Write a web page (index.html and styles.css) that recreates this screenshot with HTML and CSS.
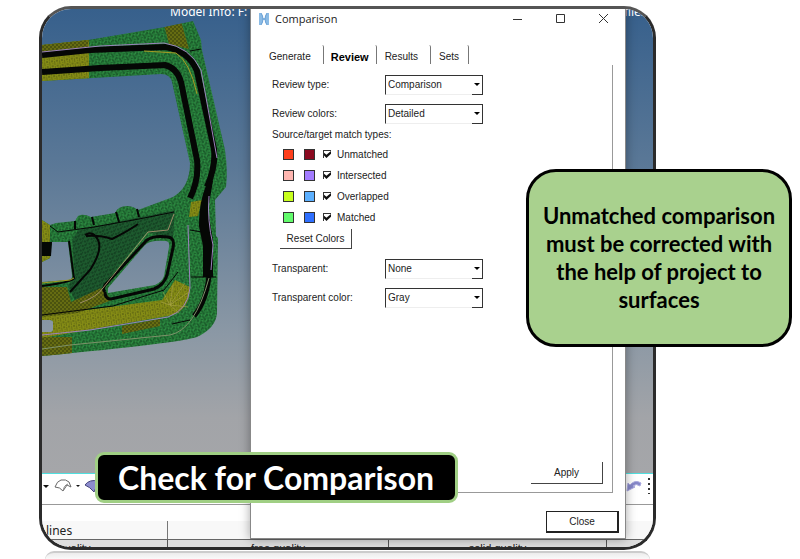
FILE: index.html
```html
<!DOCTYPE html>
<html lang="en">
<head>
<meta charset="utf-8">
<title>Check for Comparison</title>
<link rel="stylesheet" href="styles.css">
</head>
<body>
<main class="slide">
  <section class="frame">
    <div class="viewport">
      <div class="model-info"><span>Model Info: F:</span><span>file:</span></div>
      <svg class="model" viewBox="42 9 210 464" preserveAspectRatio="xMinYMin meet" aria-hidden="true">
        <defs>
          <pattern id="green" width="7" height="6" patternUnits="userSpaceOnUse" patternTransform="rotate(-12)">
            <rect width="7" height="6" fill="#257a38"/>
            <path d="M0 1h2M4 0h2M3 3h2M0 5h1M6 4h1M2 4h1" stroke="#123f20"/>
            <path d="M2 2h1M5 2h1M1 3h1M5 5h1" stroke="#349a4a"/>
          </pattern>
          <pattern id="dark" width="5" height="5" patternUnits="userSpaceOnUse" patternTransform="rotate(25)">
            <rect width="5" height="5" fill="#1d5a2e"/>
            <path d="M0 1h2M3 3h2M1 4h1" stroke="#0c2c17"/>
          </pattern>
          <pattern id="yellow" width="5" height="5" patternUnits="userSpaceOnUse" patternTransform="rotate(-8)">
            <rect width="5" height="5" fill="#858c15"/>
            <path d="M0 1h1M3 0h1M2 3h2M0 4h1" stroke="#4c5310"/>
          </pattern>
          <pattern id="olive" width="4" height="4" patternUnits="userSpaceOnUse">
            <rect width="4" height="4" fill="#666c12"/>
            <path d="M0 1h2M2 3h2" stroke="#2f390c"/>
          </pattern>
          <clipPath id="panel">
            <path clip-rule="evenodd" d="M42 45 88 40 165 27 193 21 201 40 202 50 225 150Q228 170 226 187L215 200 216 236 218 238 217 313Q216 328 197 337 180 343 42 356V332H51Q53 332 53 330V322Q53 320 50 320H42V282L68 280Q73 279 72 275L68 242H52L50 258 42 262V220L50 225 56 223 75 221 78 216 Q83 213 91 217L115 213Q118 206 127 206 133 206 138 210L173 197Q190 187 190 163L172 82Q170 74 161 74L42 81ZM108 293 155 285Q162 282 164 276L169 247Q170 240 164 241 151 240 145 245L108 288Z"/>
          </clipPath>
        </defs>
        <g clip-path="url(#panel)">
          <path fill="url(#green)" d="M42 9h190v360H42z"/>
          <path fill="url(#yellow)" d="M42 42 89 37V79L42 84ZM42 220 50 225V242H42ZM42 255H51V263H42ZM191 202 202 200 198 216 189 217ZM42 316 162 300 175 280 190 287Q190 308 173 315L42 338Z"/>
          <path fill="url(#olive)" d="M164 25 181 21 189 49 169 44ZM42 42 89 37 88 48 42 52Z"/>
          <path fill="url(#dark)" d="M78 230 135 218 175 210 173 239 147 232 100 289 76 303 68 286 75 276 72 240Z"/>
          <path fill="url(#olive)" d="M42 287H67L71 302 101 288 112 300 78 313 42 317ZM42 337H72V356L42 358ZM122 326 160 319V326L122 334Z"/>
        </g>
        <g fill="none" stroke="#050705">
          <path stroke-width="6" d="M42 55 90 50 165 47Q188 50 197 71L214 149Q216 166 207 187"/>
          <path stroke-width="6" d="M42 72 100 68 165 65Q177 68 181 82L197 160Q199 180 190 198"/>
          <path fill="#050705" stroke="none" d="M210 178 213 181 208 210 213 240 213 277H203L203 246 199 226Q199 196 210 178Z"/>
          <path stroke-width="5" d="M209 276Q206 302 194 316"/>
          <path stroke-width="3" d="M105 292Q101 288 108 282L147 240Q154 235 168 237 175 238 173 248L167 275Q164 285 154 289L111 299Q105 299 105 292"/>
          <path stroke-width="2" d="M69 241 74 278Q73 282 42 286M85 235Q93 230 98 240T90 270L70 292M86 236Q100 235 112 239 130 230 138 224M92 217 94 225M116 212 119 222M137 209 139 217M75 221V229"/>
          <path d="M50 226 58 232 94 227 139 219 174 212M190 230 202 232M191 277H216M201 49 190 51M42 315 113 306 164 290 178 272M172 324 190 320"/>
        </g>
        <path fill="#050705" d="M42 242h10l-1 14h-9z"/>
        <g fill="none" stroke="#9b83bd">
          <path d="M42 52 100 46 164 43Q190 47 201 70L217 158M209 196Q207 220 213 245L211 270"/>
          <path d="M42 335 90 330 168 317Q188 310 190 288L188 225"/>
          <path d="M80 303Q97 297 103 288L148 232 168 230 174 214" stroke="#9b8c68"/>
          <path d="M42 349 70 345 170 335Q195 330 209 278" stroke="#7d9169"/>
          <path d="M144 51 176 53Q190 62 197 94M42 283 70 280 74 278" stroke="#a79b24"/>
        </g>
        <path fill="none" stroke="#aaa24b" stroke-width=".6" d="m170 305 15-22m-15 22 19-13m-19 13 18 2m-18-2 9 8m-9-8-7-13m7 13 3-20m-3 20-9-3"/>
      </svg>
    </div>
    <div class="toolbar">
      <i class="caret"></i>
      <svg width="18" height="14" viewBox="0 0 18 14" aria-hidden="true"><path d="M1 8Q3 2 7 1 12 0 15 3L17 8 13 6 9 12Q6 8 1 8Z" fill="#fff" stroke="#666"/><path d="M9 12Q10 6 14 5" fill="none" stroke="#888"/></svg>
      <i class="caret small"></i>
      <svg width="18" height="14" viewBox="0 0 18 14" aria-hidden="true"><path d="M1 6Q5 0 15 2L10 13Q6 8 1 6Z" fill="#8c8cce" stroke="#45457c"/></svg>
      <svg class="undo" width="16" height="12" viewBox="0 0 16 12" aria-hidden="true"><path d="M1 11 2 3 4 5Q9-1 15 3L14 6Q10 3 7 6L9 7Z" fill="#8587c8" stroke="#aaa9df"/></svg>
      <i class="grip"></i>
    </div>
    <div class="message">lines</div>
    <div class="status"><span>quality</span><span>free quality</span><span>solid quality</span><span></span></div>

    <section class="dialog" aria-label="Comparison">
      <header class="titlebar">
        <svg width="10" height="12" viewBox="0 0 10 12" aria-hidden="true"><path d="M0 0H2Q4 2 4 5H6Q6 2 8 0H10V12H8Q6 10 6 7H4Q4 10 2 12H0Z" fill="#8bbbe5"/><path d="M2 0Q6 6 2 12M8 0Q4 6 8 12" fill="none" stroke="#6aa0d4"/></svg>
        <h1>Comparison</h1>
        <button aria-label="Minimize"><svg width="10" height="10" viewBox="0 0 10 10"><path d="M0 5.5h9"/></svg></button>
        <button aria-label="Maximize"><svg width="10" height="10" viewBox="0 0 10 10"><path d="M.5.5h8v8h-8z"/></svg></button>
        <button aria-label="Close window"><svg width="10" height="10" viewBox="0 0 10 10"><path d="m0 0 9 9M9 0 0 9"/></svg></button>
      </header>
      <nav class="tabs">
        <button>Generate</button><button class="active">Review</button><button>Results</button><button>Sets</button>
      </nav>
      <form class="pane">
        <div class="field"><label for="type">Review type:</label><div class="pick"><select id="type"><option>Comparison</option></select></div></div>
        <div class="field"><label for="colors">Review colors:</label><div class="pick"><select id="colors"><option>Detailed</option></select></div></div>
        <fieldset>
          <legend>Source/target match types:</legend>
          <label class="match"><i class="red"></i><i class="maroon"></i><input type="checkbox" checked>Unmatched</label>
          <label class="match"><i class="pink"></i><i class="violet"></i><input type="checkbox" checked>Intersected</label>
          <label class="match"><i class="lime"></i><i class="sky"></i><input type="checkbox" checked>Overlapped</label>
          <label class="match"><i class="green"></i><i class="blue"></i><input type="checkbox" checked>Matched</label>
        </fieldset>
        <button type="button" class="push reset">Reset Colors</button>
        <div class="field"><label for="trans">Transparent:</label><div class="pick"><select id="trans"><option>None</option></select></div></div>
        <div class="field"><label for="tcolor">Transparent color:</label><div class="pick"><select id="tcolor"><option>Gray</option></select></div></div>
        <button type="button" class="push apply">Apply</button>
      </form>
      <button class="close">Close</button>
    </section>
  </section>
  <div class="reflection"></div>
  <h2 class="caption">Check for Comparison</h2>
  <p class="callout">Unmatched comparison must be corrected with the help of project to surfaces</p>
</main>
</body>
</html>
```
FILE: styles.css
```css
* { box-sizing: border-box; }
body { margin: 0; background: #fff; font-family: "Liberation Sans", sans-serif; font-size: 10px; color: #222; }
h1, h2, p { margin: 0; }
button { padding: 0; border: 0; background: none; font: inherit; color: inherit; }

.slide { position: relative; display: flex; flex-direction: column; min-height: 100vh; padding: 6px 144px 0 39px; overflow: hidden; }
.frame { position: relative; flex: 1; display: flex; flex-direction: column; border: 3px solid #2b2b2b; border-top-color: #555; border-radius: 32px; overflow: hidden; background: #fff; }
.reflection { height: 9px; margin: 1px 6px 0; border-top: 2px solid #ccc; border-radius: 32px 32px 0 0; background: linear-gradient(#ececec, #fcfcfc); }

.viewport { flex: 1; background: linear-gradient(#37608c, #5c7997 35%, #8b98a5 70%, #a2a4a8 88%, #a5a6a9); border-bottom: 1px solid #4fe0e0; overflow: hidden; }
.model-info { display: flex; justify-content: space-between; height: 8px; padding: 0 9px 0 128px; font: 12px/16px "Noto Sans", sans-serif; color: #fff; }
.model-info span { margin-top: -5px; }
.model { display: block; width: 210px; height: 464px; margin-top: -8px; }

.toolbar { display: flex; align-items: center; gap: 4px; height: 31px; padding: 0 1px 6px; border-bottom: 1px solid #999; }
.caret { border: 3px solid transparent; border-top-color: #111; border-bottom: 0; margin-right: 1px; }
.caret.small { border-width: 2px; border-bottom: 0; margin: 0; }
.undo { margin-left: auto; }
.grip { width: 2px; height: 16px; margin: 0 2px; background: repeating-linear-gradient(#333 0 2px, transparent 2px 5px); }
.message { height: 35px; padding: 17px 4px 0; border-bottom: 1px solid #666; background: linear-gradient(90deg, transparent 125px, #777 125px 126px, transparent 126px) 0 16px no-repeat, linear-gradient(#fff 16px, #f8f8f8 16px); font: 12px/18px "Noto Sans", sans-serif; }
.status { display: grid; grid-template-columns: 126px 221px 1fr 46px; height: 7px; overflow: hidden; background: #dedede; font-size: 11px; text-align: center; }
.status span { border-right: 1px solid #555; padding-top: 2px; }
.status span:first-child { padding-right: 60px; }

.dialog { position: absolute; top: 0; bottom: 8px; left: 208px; right: 27px; display: flex; flex-direction: column; padding: 0 6px 5px 14px; background: #fff; border: 1px solid #888; border-top: 0; box-shadow: 0 0 10px rgb(0 0 0 / 35%); }
.titlebar { display: flex; align-items: center; height: 20px; margin-left: -6px; }
.titlebar h1 { flex: 1; margin-left: 6px; font: 11px/20px "Open Sans", sans-serif; }
.titlebar button { display: flex; justify-content: center; width: 43px; height: 10px; }
.titlebar button:last-child { margin-right: -6px; }
.titlebar button svg { fill: none; stroke: #333; }

.tabs { display: flex; height: 19px; margin-top: 16px; }
.tabs button { padding: 4px 12px 0 8px; border-right: 1px solid #777; border-radius: 0 2px 0 0; }
.tabs button:first-child { padding-left: 4px; }
.tabs button:last-child { padding-right: 9px; }
.tabs .active { padding: 4px 7px 0 7px; font-weight: bold; font-size: 11px; color: #000; }
.pane { flex: 1; display: flex; flex-direction: column; gap: 10px; margin: 1px 6px 18px 0; padding: 10px 9px 8px 7px; border: solid #999; border-width: 0 1px 1px 0; }
.field { display: flex; align-items: center; height: 19px; }
.field label { width: 113px; }
.pick { position: relative; width: 98px; height: 20px; }
.pick::before { content: ""; position: absolute; right: 0; bottom: 0; width: 11px; border-bottom: 1px solid #333; }
.pick::after { content: ""; position: absolute; right: 3px; top: 8px; border: 3px solid transparent; border-top-color: #000; border-bottom: 0; pointer-events: none; }
select { appearance: none; width: 100%; height: 100%; padding: 0 2px; border: 1px solid #333; border-bottom-color: #eee; border-radius: 0; background: none; font: inherit; color: inherit; }
fieldset { display: flex; flex-direction: column; gap: 9px; margin: -4px 0 -4px; padding: 0; border: 0; }
legend { padding: 0; margin-bottom: 7px; line-height: 12px; }
.match { display: flex; align-items: center; height: 12px; padding-left: 11px; }
.match i { width: 11px; height: 11px; margin-right: 10px; border: 1px solid #333; }
.match i + i { margin-right: 8px; }
.red { background: #ff3f1c; } .maroon { background: #8b0a20; }
.pink { background: #ffb6b0; } .violet { background: #a37cff; }
.lime { background: #c8ff1c; } .sky { background: #5cb0ff; }
.green { background: #62fb6c; } .blue { background: #2f70ff; }
.match input { appearance: none; width: 8px; height: 8px; margin: 0 6px 0 0; border: solid #333; border-width: 1px 0 0 1px; }
.match input:checked::before { content: ""; display: block; width: 7px; height: 7px; background: #111; clip-path: polygon(0 25%, 35% 55%, 100% 0, 100% 40%, 35% 100%, 0 65%); }
.push { width: 72px; height: 22px; border: solid #444; border-width: 0 1px 1px 0; }
.reset { height: 20px; margin-left: 8px; }
.apply { margin-top: auto; align-self: flex-end; }
.close { align-self: flex-end; width: 73px; height: 22px; border: 1px solid #222; border-right-width: 2px; border-bottom-width: 2px; }

.caption { position: absolute; left: 95px; top: 452px; padding: 0 21px 0 20px; border: 3px solid #a0cf84; border-radius: 9px; background: #000; color: #fff; font: bold 32px/45px Lato, sans-serif; white-space: nowrap; }
.callout { position: absolute; right: 8px; top: 169px; width: 266px; padding: 30px 8px; border: 3px solid #000; border-radius: 30px; background: #a9d18e; color: #000; font: bold 22px/28px Lato, sans-serif; text-align: center; }
```
